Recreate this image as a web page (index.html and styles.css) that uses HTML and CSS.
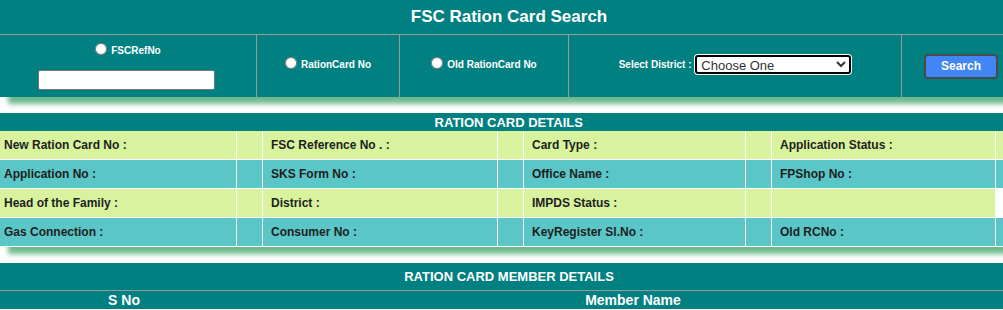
FILE: index.html
```html
<!DOCTYPE html>
<html lang="en">
<head>
    <meta charset="UTF-8">
    <meta name="viewport" content="width=device-width, initial-scale=1.0">
    <title>FSC Ration Card Search</title>
    <link rel="stylesheet" href="styles.css">
</head>
<body>

    <!-- Search panel -->
    <table class="search-table">
        <tr>
            <td colspan="5" class="search-title">FSC Ration Card Search</td>
        </tr>
        <tr class="search-options">
            <td class="opt-ref">
                <div class="opt-line">
                    <input type="radio" name="stype" id="r-ref"><label for="r-ref">FSCRefNo</label>
                </div>
                <input type="text" class="ref-input">
            </td>
            <td class="opt-rc">
                <div class="opt-lift">
                    <input type="radio" name="stype" id="r-rc"><label for="r-rc">RationCard No</label>
                </div>
            </td>
            <td class="opt-old">
                <div class="opt-lift">
                    <input type="radio" name="stype" id="r-old"><label for="r-old">Old RationCard No</label>
                </div>
            </td>
            <td class="opt-district">
                <div class="district-lift">
                    <label for="district">Select District :</label>
                    <select id="district" class="district-select">
                        <option>Choose One</option>
                    </select>
                </div>
            </td>
            <td class="opt-search">
                <button class="search-btn">Search</button>
            </td>
        </tr>
    </table>

    <!-- Ration card details -->
    <table class="details-table">
        <tr>
            <td colspan="9" class="section-head">RATION CARD DETAILS</td>
        </tr>
        <tr class="row-green">
            <td class="c-label1">New Ration Card No :</td>
            <td class="c-val"></td>
            <td class="c-label2">FSC Reference No . :</td>
            <td class="c-val"></td>
            <td class="c-label3">Card Type :</td>
            <td class="c-val"></td>
            <td class="c-label4">Application Status :</td>
            <td class="c-end"></td>
        </tr>
        <tr class="row-blue">
            <td>Application No :</td>
            <td></td>
            <td>SKS Form No :</td>
            <td></td>
            <td>Office Name :</td>
            <td></td>
            <td>FPShop No :</td>
            <td></td>
        </tr>
        <tr class="row-green">
            <td>Head of the Family :</td>
            <td></td>
            <td>District :</td>
            <td></td>
            <td>IMPDS Status :</td>
            <td></td>
            <td></td>
            <td class="c-blank"></td>
        </tr>
        <tr class="row-blue">
            <td>Gas Connection :</td>
            <td></td>
            <td>Consumer No :</td>
            <td></td>
            <td>KeyRegister Sl.No :</td>
            <td></td>
            <td>Old RCNo :</td>
            <td></td>
        </tr>
    </table>

    <!-- Member details -->
    <table class="member-table">
        <tr>
            <td colspan="2" class="member-head">RATION CARD MEMBER DETAILS</td>
        </tr>
        <tr class="member-cols">
            <th class="col-sno">S No</th>
            <th>Member Name</th>
        </tr>
    </table>

</body>
</html>
```

FILE: styles.css
```css
/* Page basics */
body {
    margin: 0;
    font-family: "Liberation Sans", Arial, sans-serif;
    background-color: #ffffff;
    overflow: hidden;
}

table {
    width: 1018px;
    border-collapse: collapse;
    box-shadow: 8px 7px 5px #6fb98d;
}

/* --- SEARCH PANEL --- */
.search-table {
    background-color: #008080;
    color: #ffffff;
}

.search-title {
    height: 34px;
    padding: 0;
    text-align: center;
    font-size: 17px;
    font-weight: bold;
    border-bottom: 1px solid #999;
}

.search-options td {
    height: 62px;
    padding: 0;
    text-align: center;
    font-size: 10px;
    font-weight: bold;
    border-right: 1px solid #999;
}

.search-options td:last-child {
    border-right: none;
}

.opt-ref { width: 256px; }
.opt-rc { width: 142px; }
.opt-old { width: 168px; }
.opt-district { width: 332px; }

.search-options input[type="radio"] {
    width: 12px;
    height: 12px;
    margin: 0 4px 0 0;
    vertical-align: -1px;
}

.opt-lift {
    margin-bottom: 6px;
}

.district-lift {
    margin-bottom: 3px;
}

.opt-line {
    margin-top: 0;
}

.ref-input {
    display: block;
    width: 177px;
    height: 20px;
    box-sizing: border-box;
    margin: 14px auto 0 38px;
    border: 1px solid #767676;
    border-radius: 2px;
    background: #ffffff;
}

.opt-district label {
    vertical-align: middle;
}

.district-select {
    width: 156px;
    height: 19px;
    box-sizing: border-box;
    margin-left: 1px;
    padding: 0;
    border: 2px solid #000;
    border-radius: 3px;
    box-shadow: 0 0 0 1px #fff;
    background: #fff;
    color: #333;
    font-family: "Liberation Sans", Arial, sans-serif;
    font-size: 13px;
    vertical-align: middle;
}

.search-btn {
    width: 74px;
    height: 25px;
    margin-left: 2px;
    background-color: #4285f4;
    border: 2px solid #4a4a4a;
    border-radius: 4px;
    color: #ffffff;
    font-family: "Liberation Sans", Arial, sans-serif;
    font-size: 12px;
    font-weight: bold;
}

/* --- RATION CARD DETAILS --- */
.details-table {
    margin-top: 16px;
    background-color: #ffffff;
}

.section-head {
    height: 18px;
    padding: 0;
    background-color: #008080;
    color: #ffffff;
    text-align: center;
    font-size: 13px;
    font-weight: bold;
}

.details-table tr.row-green td,
.details-table tr.row-blue td {
    height: 28px;
    padding: 0 0 0 8px;
    font-size: 12px;
    font-weight: bold;
    color: #1e1e1e;
    border-right: 1px solid #fff;
    border-bottom: 1px solid #fff;
}

.details-table tr.row-green td:first-child,
.details-table tr.row-blue td:first-child {
    padding-left: 4px;
}

.row-green td { background-color: #d8f29e; }
.row-blue td { background-color: #5ac6c7; }

.details-table td.c-label1 { width: 232px; }
.details-table td.c-val { width: 17px; }
.details-table td.c-label2 { width: 226px; }
.details-table td.c-label3 { width: 213px; }
.details-table td.c-label4 { width: 215px; }

.details-table tr.row-green td.c-blank {
    background-color: #ffffff;
}

/* --- MEMBER DETAILS --- */
.member-table {
    margin-top: 16px;
    background-color: #008080;
    color: #ffffff;
}

.member-head {
    height: 27px;
    padding: 0;
    text-align: center;
    font-size: 13px;
    font-weight: bold;
    border-bottom: 1px solid #999;
}

.member-cols th {
    height: 18px;
    padding: 0;
    font-size: 14px;
    text-align: center;
}

.col-sno {
    width: 248px;
}
```
